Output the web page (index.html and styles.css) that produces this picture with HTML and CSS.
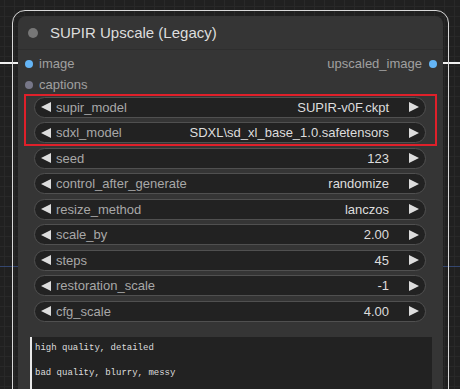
FILE: index.html
```html
<!DOCTYPE html>
<html>
<head>
  <title>SUPIR Upscale (Legacy)</title>
  <meta http-equiv="Content-Type" content="text/html; charset=utf-8" />
  <link rel="stylesheet" href="styles.css">
</head>
<body>
  <div class="canvas">
    <div class="group-line"></div>
    <div class="link link-in"></div>
    <div class="link link-out"></div>

    <div class="selected">
      <div class="node">
        <div class="node-title">
          <span class="title-dot"></span>
          SUPIR Upscale (Legacy)
        </div>

        <div class="slots">
          <div class="slot-row">
            <div class="slot"><span class="dot dot-image"></span>image</div>
            <div class="slot slot-out">upscaled_image<span class="dot dot-image"></span></div>
          </div>
          <div class="slot-row">
            <div class="slot"><span class="dot dot-other"></span>captions</div>
          </div>
        </div>

        <div class="widgets">
          <div class="highlight">
            <div class="widget">
              <span class="arrow arrow-left"></span>
              <span class="w-label">supir_model</span>
              <span class="w-value">SUPIR-v0F.ckpt</span>
              <span class="arrow arrow-right"></span>
            </div>
            <div class="widget">
              <span class="arrow arrow-left"></span>
              <span class="w-label">sdxl_model</span>
              <span class="w-value">SDXL\sd_xl_base_1.0.safetensors</span>
              <span class="arrow arrow-right"></span>
            </div>
          </div>
          <div class="widget">
            <span class="arrow arrow-left"></span>
            <span class="w-label">seed</span>
            <span class="w-value">123</span>
            <span class="arrow arrow-right"></span>
          </div>
          <div class="widget">
            <span class="arrow arrow-left"></span>
            <span class="w-label">control_after_generate</span>
            <span class="w-value">randomize</span>
            <span class="arrow arrow-right"></span>
          </div>
          <div class="widget">
            <span class="arrow arrow-left"></span>
            <span class="w-label">resize_method</span>
            <span class="w-value">lanczos</span>
            <span class="arrow arrow-right"></span>
          </div>
          <div class="widget">
            <span class="arrow arrow-left"></span>
            <span class="w-label">scale_by</span>
            <span class="w-value">2.00</span>
            <span class="arrow arrow-right"></span>
          </div>
          <div class="widget">
            <span class="arrow arrow-left"></span>
            <span class="w-label">steps</span>
            <span class="w-value">45</span>
            <span class="arrow arrow-right"></span>
          </div>
          <div class="widget">
            <span class="arrow arrow-left"></span>
            <span class="w-label">restoration_scale</span>
            <span class="w-value">-1</span>
            <span class="arrow arrow-right"></span>
          </div>
          <div class="widget">
            <span class="arrow arrow-left"></span>
            <span class="w-label">cfg_scale</span>
            <span class="w-value">4.00</span>
            <span class="arrow arrow-right"></span>
          </div>
        </div>

        <div class="prompt">
          <div class="prompt-line">high quality, detailed</div>
          <div class="prompt-line">bad quality, blurry, messy</div>
        </div>
      </div>
    </div>
  </div>
</body>
</html>
```

FILE: styles.css
```css
body {
  margin: 0;
  padding: 0;
  background-color: #202020;
  font-family: Arial, "Liberation Sans", sans-serif;
}

.canvas {
  position: relative;
  width: 460px;
  height: 389px;
  overflow: hidden;
  background-color: #202020;
  background-image:
    linear-gradient(#282828 1px, transparent 1px),
    linear-gradient(90deg, #282828 1px, transparent 1px);
  background-size: 10px 10px;
  background-position: 4px 6px;
}

.group-line {
  position: absolute;
  left: 0;
  right: 0;
  top: 266px;
  height: 1px;
  background-color: #34466e;
}

.link {
  position: absolute;
  height: 2px;
  background-color: #f0f0f0;
}

.link-in {
  left: 0;
  width: 20px;
  top: 62px;
}

.link-out {
  left: 440px;
  width: 20px;
  top: 62px;
}

.selected {
  position: relative;
  margin: 10px 0 0 12px;
  width: 425px;
  height: 400px;
  padding: 5px;
  border: 1px solid #d8d8d8;
  border-radius: 13px;
}

.node {
  height: 100%;
  background-color: #353535;
  border-radius: 8px 8px 0 0;
}

.node-title {
  display: flex;
  align-items: center;
  height: 33px;
  padding-left: 10px;
  border-bottom: 1px solid #2e2e2e;
  color: #dddddd;
  font-size: 15px;
}

.title-dot {
  width: 10px;
  height: 10px;
  margin-right: 12px;
  border-radius: 50%;
  background-color: #777;
}

.slots {
  padding: 3px 6px 0 7px;
}

.slot-row {
  display: flex;
  justify-content: space-between;
  align-items: center;
  height: 21px;
}

.slot {
  display: flex;
  align-items: center;
  color: #a0a0a0;
  font-size: 13px;
}

.dot {
  width: 8px;
  height: 8px;
  border-radius: 50%;
  margin-right: 6px;
}

.slot-out .dot {
  margin-right: 0;
  margin-left: 7px;
}

.dot-image {
  background-color: #64b5f6;
}

.dot-other {
  background-color: #777788;
}

.widgets {
  display: flex;
  flex-direction: column;
  gap: 4.5px;
  padding: 1.5px 17px 0 16px;
}

.highlight {
  display: flex;
  flex-direction: column;
  gap: 4.5px;
  margin: -3px -11px -3px -10px;
  padding: 1px 9px 1px 8px;
  border: 2px solid #e0202a;
}

.widget {
  display: flex;
  align-items: center;
  height: 19px;
  padding: 0 6px;
  background-color: #222;
  border: 1px solid #505050;
  border-radius: 11px;
  font-size: 13px;
}

.arrow {
  width: 0;
  height: 0;
  border-top: 5px solid transparent;
  border-bottom: 5px solid transparent;
}

.arrow-left {
  border-right: 10px solid #dddddd;
}

.arrow-right {
  border-left: 10px solid #dddddd;
}

.w-label {
  margin-left: 5px;
  color: #a8a8a8;
  white-space: nowrap;
}

.w-value {
  flex: 1;
  margin-right: 20px;
  text-align: right;
  color: #dddddd;
  white-space: nowrap;
}

.prompt {
  margin: 15px 11px 0 12px;
  padding: 5px 0 0 3px;
  height: 60px;
  background-color: #222;
  border-left: 2px solid #e8e8e8;
  font-family: "Liberation Mono", monospace;
  font-size: 9px;
  color: #dddddd;
}

.prompt-line {
  line-height: 12.5px;
  margin-bottom: 12.5px;
}
```
